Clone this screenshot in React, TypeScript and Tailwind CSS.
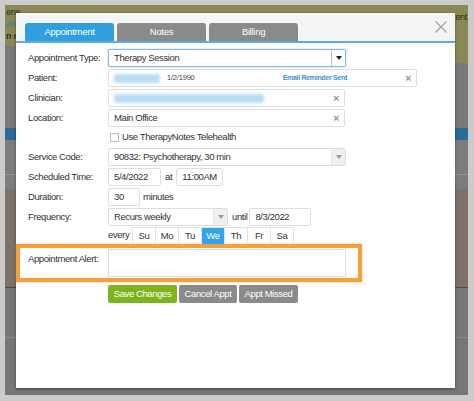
import { ReactNode } from 'react';

const font = "font-['Liberation_Sans',Arial,sans-serif]";

function Row({ label, children, className = '' }: { label?: string; children: ReactNode; className?: string }) {
  return (
    <div className={`flex items-center h-[18px] mb-[2px] ${className}`}>
      <div className="w-[80px] shrink-0 text-[9.5px] tracking-[-0.4px] text-[#333]">{label}</div>
      {children}
    </div>
  );
}

function Field({ w, children, focus = false }: { w: string; children?: ReactNode; focus?: boolean }) {
  return (
    <div
      className={`${w} h-[18px] flex items-center px-[5px] bg-white rounded-[2px] border text-[9.5px] tracking-[-0.4px] text-[#333] ${
        focus ? 'border-[#7fbce6] shadow-[0_0_2px_rgba(80,160,220,0.6)]' : 'border-[#dedede]'
      }`}
    >
      {children}
    </div>
  );
}

function Clear() {
  return <span className="ml-auto text-[11px] leading-none text-[#9a9a9a] font-bold">×</span>;
}

function Arrow({ dark = false }: { dark?: boolean }) {
  return (
    <div
      className={`ml-auto -mr-[5px] w-[14px] h-full flex items-center justify-center border-l ${
        dark ? 'border-[#bbb] bg-white' : 'border-[#e3e3e3] bg-[#f0f0f0]'
      }`}
    >
      <svg width="6" height="4" viewBox="0 0 6 4">
        <path d="M0 0h6L3 4z" fill={dark ? '#222' : '#999'} />
      </svg>
    </div>
  );
}

export default function App() {
  const days = ['Su', 'Mo', 'Tu', 'We', 'Th', 'Fr', 'Sa'];
  return (
    <div className={`relative w-[474px] h-[401px] bg-[#cbcbcb] overflow-hidden whitespace-nowrap tracking-[-0.3px] ${font}`}>
      {/* Dimmed page behind the dialog */}
      <div className="absolute left-[5px] top-[5px] w-[463px] h-[390px] flex flex-col bg-[#7a7a7a]">
        <div className="h-[41px] bg-[#8b8857] flex justify-between px-[1px] pt-[1px] text-[9px] leading-[12px] text-[#2c2c20]">
          <div>
            <div>ene</div>
            <div className="text-[#3f7f86]">en</div>
            <div className="font-bold">n c</div>
          </div>
          <div className="pt-[5px]">ent</div>
        </div>
        <div className="flex justify-end">
          <div className="w-[13px] h-[17px] bg-[#8b8857]" />
        </div>
        <div className="h-[65px]" />
        <div className="h-[12px] bg-[#2b6b98]" />
        <div className="h-[34px] bg-[#7d7d7d]" />
        <div className="h-px bg-[#959595]" />
        <div className="h-[14px] bg-[#7d7d7d]" />
        <div className="h-[98px] bg-[#7e7169]" />
        <div className="h-px bg-[#4a4a4a]" />
        <div className="h-[49px] bg-[#777]" />
        <div className="h-px bg-[#8a8a8a]" />
        <div className="flex-1 bg-[#777]" />
      </div>

      {/* Dialog */}
      <div className="absolute left-[16px] top-[13px] w-[439px] h-[375px] bg-white shadow-[0_1px_3px_rgba(0,0,0,0.4)]">
        <div className="relative h-[30px] bg-[#f5f5f5] border-b-2 border-[#5cacdf] flex items-end pl-[9px] gap-[3px]">
          <div className="w-[89px] h-[18px] rounded-t-[3px] bg-[#2f9fe0] flex items-center justify-center text-[9.5px] text-white">
            Appointment
          </div>
          <div className="w-[89px] h-[18px] rounded-t-[3px] bg-[#8a8a8a] flex items-center justify-center text-[9.5px] text-white">
            Notes
          </div>
          <div className="w-[89px] h-[18px] rounded-t-[3px] bg-[#8a8a8a] flex items-center justify-center text-[9.5px] text-white">
            Billing
          </div>
          <svg className="absolute right-[8px] top-[8px]" width="12" height="12" viewBox="0 0 12 12">
            <path d="M0.5 0.5L11.5 11.5M11.5 0.5L0.5 11.5" stroke="#9c9c9c" strokeWidth="1.1" />
          </svg>
        </div>

        <div className="pl-[12px] pt-[6px]">
          <Row label="Appointment Type:">
            <Field w="w-[238px]" focus>
              <span>Therapy Session</span>
              <Arrow dark />
            </Field>
          </Row>
          <Row label="Patient:">
            <Field w="w-[309px]">
              <span className="w-[46px] h-[9px] rounded-[3px] bg-[#b9dcf5] blur-[1.5px]" />
              <span className="ml-[7px] text-[7.5px] tracking-[-0.2px] text-[#444]">1/2/1990</span>
              <span className="ml-auto mr-[58px] text-[7px] tracking-[-0.3px] font-bold text-[#3d93d1]">Email Reminder Sent</span>
              <span className="text-[11px] leading-none text-[#9a9a9a] font-bold">×</span>
            </Field>
          </Row>
          <Row label="Clinician:">
            <Field w="w-[237px]">
              <span className="w-[150px] h-[9px] rounded-[3px] bg-[#b9dcf5] blur-[1.5px]" />
              <Clear />
            </Field>
          </Row>
          <Row label="Location:">
            <Field w="w-[237px]">
              <span>Main Office</span>
              <Clear />
            </Field>
          </Row>
          <div className="flex items-center h-[17px] mb-[2px] pl-[82px] text-[9.5px] tracking-[-0.4px] text-[#333]">
            <span className="w-[9px] h-[9px] border border-[#bdbdbd] bg-white mr-[3px]" />
            <span>Use TherapyNotes Telehealth</span>
          </div>
          <Row label="Service Code:">
            <Field w="w-[238px]">
              <span>90832: Psychotherapy, 30 min</span>
              <Arrow />
            </Field>
          </Row>
          <Row label="Scheduled Time:">
            <Field w="w-[53px]">5/4/2022</Field>
            <span className="mx-[4px] text-[9.5px] text-[#333]">at</span>
            <Field w="w-[47px]">11:00AM</Field>
          </Row>
          <Row label="Duration:">
            <Field w="w-[32px]">30</Field>
            <span className="ml-[3px] text-[9.5px] tracking-[-0.4px] text-[#333]">minutes</span>
          </Row>
          <Row label="Frequency:" className="!mb-[1px]">
            <Field w="w-[120px]">
              <span>Recurs weekly</span>
              <Arrow />
            </Field>
            <span className="ml-[4px] mr-[2px] text-[9.5px] tracking-[-0.4px] text-[#333]">until</span>
            <Field w="w-[62px]">8/3/2022</Field>
          </Row>
          <div className="flex items-stretch h-[17px] pl-[80px] text-[9.5px] tracking-[-0.4px] text-[#333]">
            <span className="w-[24px] flex items-center">every</span>
            <div className="flex border-r border-t border-[#e2e2e2]">
              {days.map((d) => (
                <div
                  key={d}
                  className={`w-[23px] flex items-center justify-center border-l border-[#e2e2e2] ${
                    d === 'We' ? 'bg-[#33a3ea] text-white' : ''
                  }`}
                >
                  {d}
                </div>
              ))}
            </div>
          </div>

          <div className="-ml-[12px] w-[346px] h-[38px] border-[4px] border-[#f5a03a] flex pl-[8px] pt-[1px] shadow-[0_0_2px_rgba(245,150,40,0.6)]">
            <div className="w-[80px] pt-[3px] text-[9.5px] tracking-[-0.4px] text-[#333]">Appointment Alert:</div>
            <div className="w-[238px] h-[28px] border border-[#dedede] bg-white" />
          </div>

          <div className="flex gap-[2px] mt-[3px] pl-[80px]">
            <button className="w-[69px] h-[18px] rounded-[2px] bg-[#7bb51a] text-white text-[9.5px] tracking-[-0.4px]">Save Changes</button>
            <button className="w-[58px] h-[18px] rounded-[2px] bg-[#8a8a8a] text-white text-[9.5px] tracking-[-0.4px]">Cancel Appt</button>
            <button className="w-[59px] h-[18px] rounded-[2px] bg-[#8a8a8a] text-white text-[9.5px] tracking-[-0.4px]">Appt Missed</button>
          </div>
        </div>
      </div>
    </div>
  );
}
